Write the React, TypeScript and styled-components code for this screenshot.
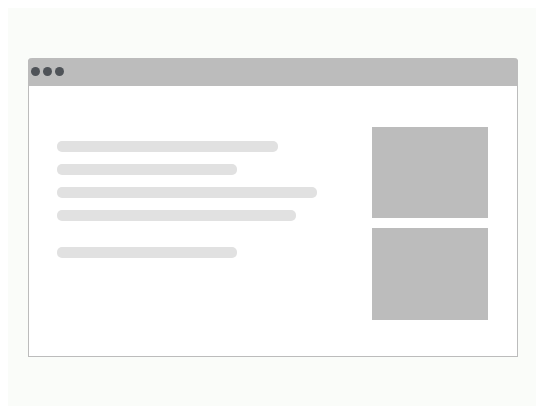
import React from "react";
import styled, { createGlobalStyle } from "styled-components";

const GlobalStyle = createGlobalStyle`
  html, body {
    margin: 0;
    padding: 0;
    background: #ffffff;
    font-family: "Liberation Sans", Arial, sans-serif;
  }
`;

const Stage = styled.div`
  margin: 8px;
  width: 528px;
  height: 398px;
  box-sizing: border-box;
  padding: 50px 18px 0 20px;
  background: #fafcf9;
`;

const Window = styled.div`
  width: 490px;
  height: 299px;
  box-sizing: border-box;
  border: 1px solid #bcbcbc;
  border-top: none;
  border-radius: 4px 4px 0 0;
  background: #ffffff;
  display: flex;
  flex-direction: column;
`;

const TitleBar = styled.div`
  height: 28px;
  margin: 0 -1px;
  background: #bcbcbc;
  border-radius: 4px 4px 0 0;
  display: flex;
  align-items: center;
  gap: 3px;
  padding-left: 3px;
  padding-bottom: 1px;
  box-sizing: border-box;
`;

const Dot = styled.span`
  width: 9px;
  height: 9px;
  border-radius: 50%;
  background: #4f5358;
`;

const Content = styled.div`
  flex: 1;
  display: flex;
  justify-content: space-between;
  padding: 0 29px 0 28px;
`;

const TextColumn = styled.div`
  display: flex;
  flex-direction: column;
  padding-top: 55px;
`;

const Line = styled.div<{ $w: number; $gap: number }>`
  width: ${(p) => p.$w}px;
  height: 11px;
  border-radius: 5px;
  background: #e1e1e1;
  margin-bottom: ${(p) => p.$gap}px;
`;

const MediaColumn = styled.div`
  display: flex;
  flex-direction: column;
  gap: 10px;
  padding-top: 41px;
`;

const MediaBox = styled.div<{ $h: number }>`
  width: 116px;
  height: ${(p) => p.$h}px;
  background: #bcbcbc;
`;

const lines = [
  { w: 221, gap: 12 },
  { w: 180, gap: 12 },
  { w: 260, gap: 12 },
  { w: 239, gap: 26 },
  { w: 180, gap: 0 },
];

export default function App() {
  return (
    <>
      <GlobalStyle />
      <Stage>
        <Window>
          <TitleBar>
            <Dot />
            <Dot />
            <Dot />
          </TitleBar>
          <Content>
            <TextColumn>
              {lines.map((l, i) => (
                <Line key={i} $w={l.w} $gap={l.gap} />
              ))}
            </TextColumn>
            <MediaColumn>
              <MediaBox $h={91} />
              <MediaBox $h={92} />
            </MediaColumn>
          </Content>
        </Window>
      </Stage>
    </>
  );
}
